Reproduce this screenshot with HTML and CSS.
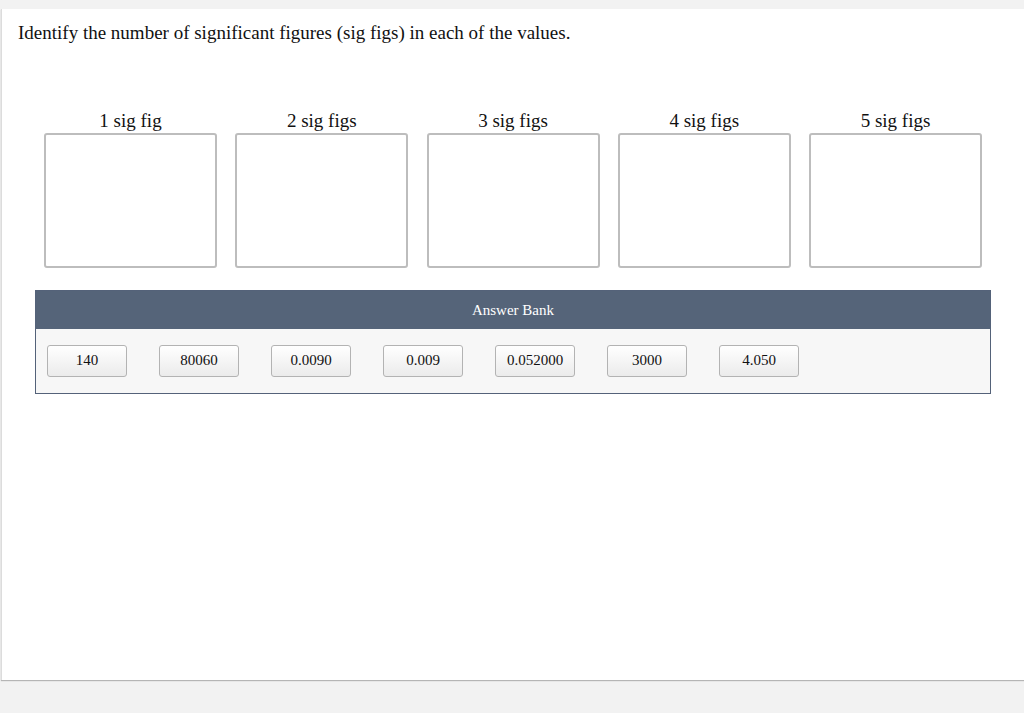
FILE: index.html
```html
<!DOCTYPE html>
<html>
<head>
<meta charset="utf-8">
<link rel="stylesheet" href="styles.css">
</head>
<body>
<div class="card">
  <p class="prompt">Identify the number of significant figures (sig figs) in each of the values.</p>
  <div class="targets">
    <div class="target"><div class="label">1 sig fig</div><div class="drop"></div></div>
    <div class="target"><div class="label">2 sig figs</div><div class="drop"></div></div>
    <div class="target"><div class="label">3 sig figs</div><div class="drop"></div></div>
    <div class="target"><div class="label">4 sig figs</div><div class="drop"></div></div>
    <div class="target"><div class="label">5 sig figs</div><div class="drop"></div></div>
  </div>
  <div class="bank">
    <div class="bank-head">Answer Bank</div>
    <div class="bank-body">
      <div class="chip">140</div>
      <div class="chip">80060</div>
      <div class="chip">0.0090</div>
      <div class="chip">0.009</div>
      <div class="chip">0.052000</div>
      <div class="chip">3000</div>
      <div class="chip">4.050</div>
    </div>
  </div>
</div>
</body>
</html>
```
FILE: styles.css
```css
html, body {
  margin: 0;
  padding: 0;
  background: #f2f2f2;
}
body {
  font-family: "Liberation Serif", "Times New Roman", serif;
  color: #111;
  padding-top: 9px;
  height: 713px;
  box-sizing: border-box;
  overflow: hidden;
}
.card {
  margin-left: 1px;
  height: 671px;
  background: #fff;
  border-left: 1px solid #dcdcdc;
  box-shadow: 0 1px 1px rgba(0,0,0,0.25);
  box-sizing: border-box;
  padding-top: 13px;
}
.prompt {
  margin: 0;
  padding-left: 16px;
  font-size: 19px;
  line-height: 21px;
}
.targets {
  display: grid;
  grid-template-columns: repeat(5, 173px);
  column-gap: 18.25px;
  margin-top: 67px;
  padding-left: 42px;
}
.target {
  display: flex;
  flex-direction: column;
  align-items: center;
}
.label {
  font-size: 19px;
  line-height: 21px;
  height: 23px;
}
.drop {
  width: 173px;
  height: 135px;
  box-sizing: border-box;
  border: 2px solid #bdbdbd;
  border-radius: 3px;
  background: #fff;
}
.bank {
  margin: 22px 0 0 33px;
  width: 956px;
  border: 1px solid #546279;
  box-sizing: border-box;
}
.bank-head {
  background: #556479;
  color: #fff;
  height: 38px;
  display: flex;
  align-items: center;
  justify-content: center;
  font-size: 15px;
}
.bank-body {
  background: #f7f7f7;
  padding: 16px 11px 16px;
  display: flex;
  gap: 32px;
}
.chip {
  width: 80px;
  height: 32px;
  box-sizing: border-box;
  border: 1px solid #b3b3b3;
  border-radius: 3px;
  background: linear-gradient(#ffffff, #ebebeb);
  display: flex;
  align-items: center;
  justify-content: center;
  font-size: 15px;
  padding-bottom: 2px;
  color: #111;
}
```
